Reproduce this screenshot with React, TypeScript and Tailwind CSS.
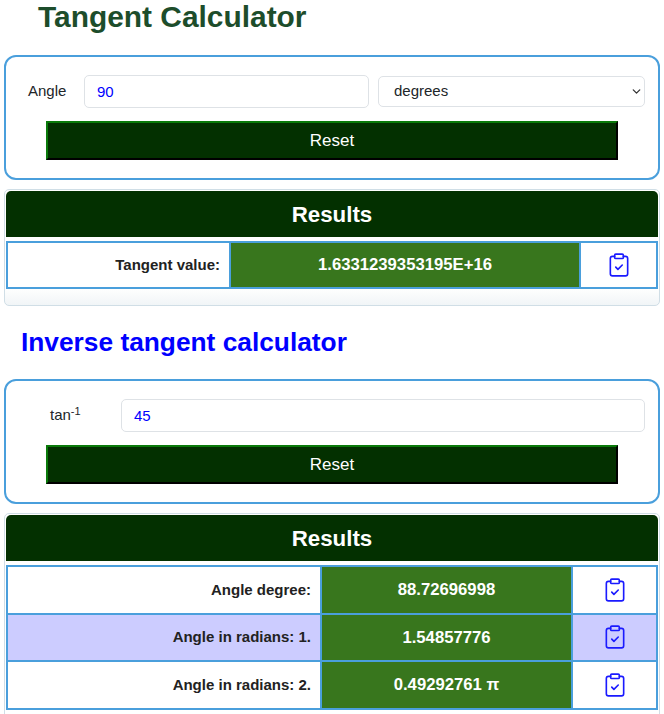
import { ChevronDown, ClipboardCheck } from "lucide-react";

function CopyIcon() {
  return <ClipboardCheck className="h-[26px] w-[26px] text-[#1a1aff]" strokeWidth={1.5} aria-hidden />;
}

function ResetButton() {
  return (
    <button
      type="button"
      className="ml-10 block h-[39px] w-[572px] border-2 border-t-[#0a7a0a] border-r-black border-b-black border-l-[#0a7a0a] bg-[#033000] text-[17px] text-white"
    >
      Reset
    </button>
  );
}

function ResultsHeader() {
  return (
    <div className="flex h-[46px] items-center justify-center rounded-t-[5px] bg-[#033000] pt-px text-[22.3px] font-bold text-white">
      Results
    </div>
  );
}

type Row = { label: string; value: string; shaded?: boolean };

function ResultRows({ rows, rowHeight, labelWidth, valueWidth }: { rows: Row[]; rowHeight: string; labelWidth: string; valueWidth: string }) {
  return (
    <div className="mt-1 border-t-2 border-l-2 border-[#4a9fdc]">
      {rows.map((row) => (
        <div key={row.label} className={`flex ${rowHeight} border-r-2 border-b-2 border-[#4a9fdc] ${row.shaded ? "bg-[#ccccff]" : "bg-white"}`}>
          <div className={`${labelWidth} flex items-center justify-end pr-[9px] text-[15px] font-bold text-[#222]`}>{row.label}</div>
          <div className={`${valueWidth} flex items-center justify-center border-x-2 border-[#4a9fdc] bg-[#38761d] text-[16.7px] font-bold text-white`}>
            {row.value}
          </div>
          <div className="flex flex-1 items-center justify-center">
            <CopyIcon />
          </div>
        </div>
      ))}
    </div>
  );
}

export default function App() {
  return (
    <div className="h-[714px] w-[664px] overflow-hidden bg-white font-['Liberation_Sans',Arial,sans-serif] text-[#212529]">
      <h1 className="h-[55px] pl-[38px] text-[29.9px] leading-[34px] font-bold text-[#1d4d2b]">Tangent Calculator</h1>

      <section className="mx-1 h-[125px] rounded-xl border-2 border-[#4a9fdc] pt-[18px]">
        <div className="flex items-center pr-[13px] pl-[22px]">
          <label className="w-[56px] text-[15px]">Angle</label>
          <input
            readOnly
            value="90"
            className="h-[33px] w-[285px] rounded-[5px] border border-[#dee2e6] pb-px pl-3 text-[15px] text-[#0000ff]"
          />
          <div className="relative ml-[9px] flex-1">
            <select className="h-[31px] w-full appearance-none rounded-[5px] border border-[#dee2e6] bg-white pl-[15px] text-[15px] text-[#212529]">
              <option>degrees</option>
              <option>radians</option>
            </select>
            <ChevronDown className="pointer-events-none absolute top-[9px] right-[2px] h-[13px] w-[13px] text-[#333]" strokeWidth={2.4} aria-hidden />
          </div>
        </div>
        <div className="mt-[13px]">
          <ResetButton />
        </div>
      </section>

      <section className="mx-1 mt-[9px] h-[117px] rounded-[5px] border border-[#d0dee6] bg-gradient-to-b from-white from-85% to-[#f1f5f7] p-px">
        <ResultsHeader />
        <ResultRows
          rows={[{ label: "Tangent value:", value: "1.6331239353195E+16" }]}
          rowHeight="h-[46px]"
          labelWidth="w-[221px]"
          valueWidth="w-[352px]"
        />
      </section>

      <h2 className="mt-[19px] h-[54px] pl-[21px] text-[26.3px] leading-[34px] font-bold text-[#0000ff]">Inverse tangent calculator</h2>

      <section className="mx-1 h-[125px] rounded-xl border-2 border-[#4a9fdc] pt-[18px]">
        <div className="flex items-center pr-[13px] pl-[44px]">
          <label className="w-[71px] text-[15px]">
            tan<sup className="text-[11px]">-1</sup>
          </label>
          <input
            readOnly
            value="45"
            className="h-[33px] flex-1 rounded-[5px] border border-[#dee2e6] pb-px pl-3 text-[15px] text-[#0000ff]"
          />
        </div>
        <div className="mt-[13px]">
          <ResetButton />
        </div>
      </section>

      <section className="mx-1 mt-[9px] h-[210px] rounded-[5px] border border-[#d0dee6] p-px">
        <ResultsHeader />
        <ResultRows
          rows={[
            { label: "Angle degree:", value: "88.72696998" },
            { label: "Angle in radians: 1.", value: "1.54857776", shaded: true },
            { label: "Angle in radians: 2.", value: "0.49292761 π" },
          ]}
          rowHeight="h-[47.5px]"
          labelWidth="w-[312px]"
          valueWidth="w-[253px]"
        />
      </section>
    </div>
  );
}
